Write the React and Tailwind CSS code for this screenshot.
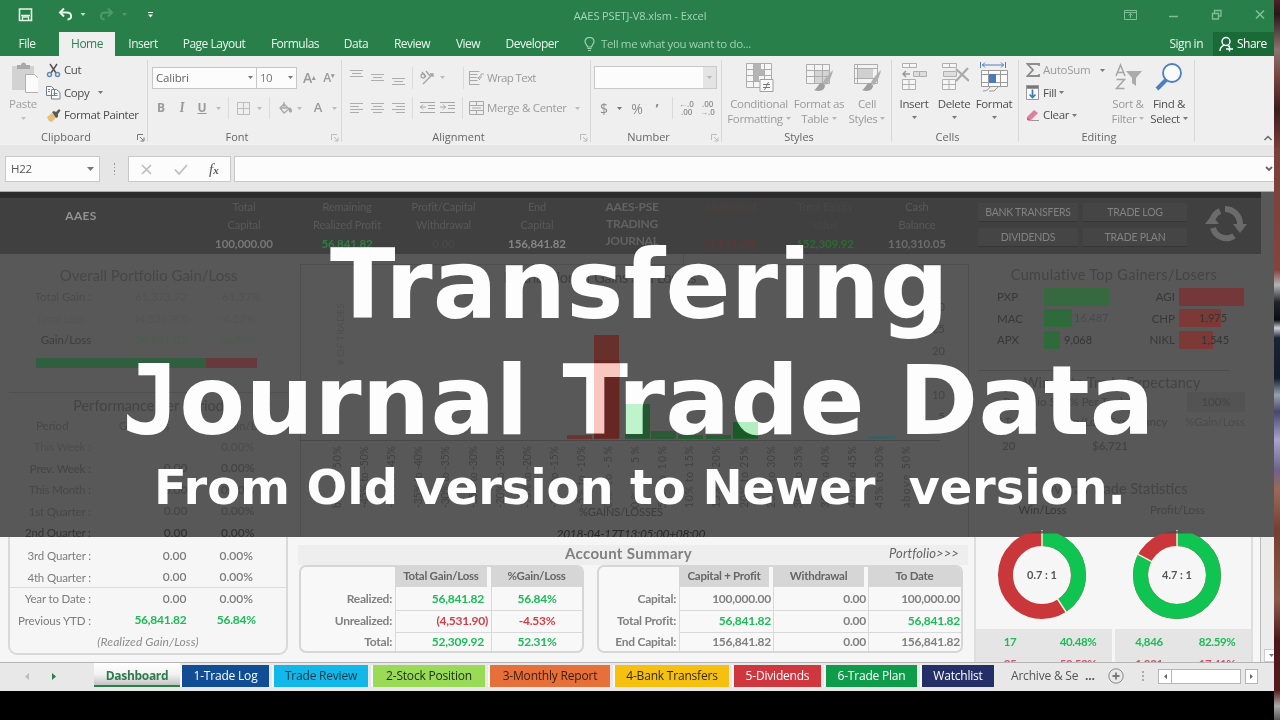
import clsx from "clsx";

const UI = "font-['Open_Sans','Noto_Sans',sans-serif]";

const TABS = [
  ["Insert", "w-[56px]"],
  ["Page Layout", "w-[86px]"],
  ["Formulas", "w-[76px]"],
  ["Data", "w-[46px]"],
  ["Review", "w-[66px]"],
  ["View", "w-[46px]"],
  ["Developer", "w-[82px]"],
];

const SHEETS = [
  ["1-Trade Log", "ml-[2px] w-[87px] bg-[#114d94] text-white"],
  ["Trade Review", "ml-[5px] w-[94px] bg-[#12b8ea] text-[#173540]"],
  ["2-Stock Position", "ml-[5px] w-[112px] bg-[#99da57] text-[#22301a]"],
  ["3-Monthly Report", "ml-[5px] w-[120px] bg-[#e5703a] text-[#3a1c10]"],
  ["4-Bank Transfers", "ml-[5px] w-[114px] bg-[#f5c010] text-[#352a08]"],
  ["5-Dividends", "ml-[5px] w-[87px] bg-[#cd373d] text-white"],
  ["6-Trade Plan", "ml-[5px] w-[91px] bg-[#0f9c4a] text-white"],
  ["Watchlist", "ml-[5px] w-[72px] bg-[#232f66] text-white"],
];

const BARS = [
  { x: 567, y: 435, h: 4, c: "#6b3431" },
  { x: 594, y: 335, h: 104, c: "#68302b" },
  { x: 625, y: 404, h: 35, c: "#2d5a3c" },
  { x: 651, y: 431, h: 8, c: "#2d5a36" },
  { x: 678, y: 435, h: 4, c: "#24602f" },
  { x: 706, y: 435, h: 4, c: "#24602f" },
  { x: 733, y: 422, h: 17, c: "#245f33" },
];

const RANGES = [
  "below -50%", "-45% to -50%", "-40% to -45%", "-35% to -40%", "-30% to -35%", "-25% to -30%",
  "-20% to -25%", "-15% to -20%", "-10% to -15%", "-5% to -10%", "0% to -5%", "0% to 5%", "5% to 10%",
  "10% to 15%", "15% to 20%", "20% to 25%", "25% to 30%", "30% to 35%", "35% to 40%", "40% to 45%",
  "45% to 50%", "above 50%",
];

function Caret({ className = "text-[#777]" }) {
  return (
    <svg width="5" height="3" viewBox="0 0 5 3" className={clsx("shrink-0", className)}>
      <path d="M0 0h5L2.5 3z" fill="currentColor" />
    </svg>
  );
}

function Launcher({ dim }) {
  return (
    <svg width="8" height="8" viewBox="0 0 8 8" fill="none" stroke={dim ? "#bbb" : "#777"}>
      <path d="M.5 6V.5H6M3 3l3.5 3.5M7 3.5V7H3.5" />
    </svg>
  );
}

function Group({ label, width, launcher, dim, children }) {
  return (
    <div className={clsx("relative flex h-[89px] flex-col", width)}>
      <div className="flex h-[73px] w-full">{children}</div>
      <div className="flex h-[18px] items-center justify-center pt-[3px] pr-4 text-[11px] text-[#666]">{label}</div>
      {launcher && (
        <span className="absolute right-[3px] bottom-[3px]">
          <Launcher dim={dim} />
        </span>
      )}
      <span className="absolute top-1 right-0 h-[82px] w-px bg-[#d8d8d8]" />
    </div>
  );
}

function Sep({ className }) {
  return <span className={clsx("h-[22px] w-px shrink-0 bg-[#dadada]", className)} />;
}

function Lines({ rows, className }) {
  return (
    <svg width="14" height="14" viewBox="0 0 14 14" stroke="#adadad" className={clsx("shrink-0", className)}>
      {rows.map(([x1, x2, y]) => (
        <path key={y} d={`M${x1} ${y}.5H${x2}`} />
      ))}
    </svg>
  );
}

function BigButton({ icon, lines, width, dim, caretBelow }) {
  return (
    <div className={clsx("flex flex-col items-center pt-[6px]", width, dim ? "text-[#9b9b9b]" : "text-[#505050]")}>
      <div className="mb-[2px] flex h-[32px] items-start justify-center">{icon}</div>
      {lines.map((l, i) => (
        <div key={l} className="flex h-[15px] items-center gap-[3px] text-[11.5px] leading-[15px] tracking-[-0.35px] whitespace-nowrap">
          {l}
          {i === 1 && <Caret className={dim ? "text-[#b5b5b5]" : "text-[#777]"} />}
        </div>
      ))}
      {caretBelow && <div className="flex h-[13px] items-center"><Caret /></div>}
    </div>
  );
}

function GridIcon({ kind }) {
  return (
    <svg width="30" height="31" viewBox="0 0 30 31" fill="none" stroke="#adadad">
      {kind === "cond" && (
        <>
          <path fill="#f6f6f6" d="M2.500 1.500h25v24h-25zM2.500 7.500h25M2.500 13.500h25M2.500 19.500h25M9.500 1.500v24M20.500 1.500v24" />
          <path d="M10 2h7v5h3v6h-5v6h-5z" fill="#b4b4b4" stroke="none" />
          <path d="M16 17.500h13v12H16z" fill="#fafafa" stroke="#a0a0a0" />
          <path d="M19 22.500h7M19 25.500h7M24.500 20l-4 8" stroke="#777" />
        </>
      )}
      {(kind === "table" || kind === "cell") && (
        <>
          <path fill="#f3f3f3" d="M2.500 2.500h23v19h-23z" />
          {kind === "table" ? (
            <>
              <path d="M10 8h15v13H10z" fill="#d4d4d4" stroke="none" />
              <path d="M2.500 8.500h23M2.500 14.500h23M10.500 2.500v19M18.500 2.500v19" />
            </>
          ) : (
            <>
              <path d="M6 7h15v9H6z" fill="#d0d0d0" stroke="none" />
              <path d="M2.500 6.500h23M5.500 2.500v19M2.500 16.500h23" />
            </>
          )}
          <path d="M29 8c-4 4-9 9-10 13l3 2c3-3 6-9 7-15z" fill="#b0b0b0" stroke="none" />
          <path d="M18 21c-4 0-4 5-8 7 5 2 11 1 11-5z" fill="#9f9f9f" stroke="none" />
        </>
      )}
    </svg>
  );
}

function CellsIcon({ kind }) {
  return (
    <svg width="30" height="31" viewBox="0 0 30 31" fill="none" stroke="#b0b0b0">
      {kind !== "format" && <path fill="#f6f6f6" d="M3.500 1.500h14v4h-14zM10.500 1.500v4M3.500 17.500h13v10h-13zM10 17.500v10M3.500 22.500h13" />}
      {kind === "insert" && (
        <>
          <path d="M14.500 9.500h13v5h-13zM20.500 9.500v5" fill="#ddd" />
          <path d="M4 12h7M7 9l-3 3 3 3" stroke="#999" strokeWidth="1.500" />
        </>
      )}
      {kind === "delete" && (
        <>
          <path d="M4.500 9.500h13v5h-13z" fill="#ddd" />
          <path d="M17 7l13 12M29 6L17 19" stroke="#a9a9a9" strokeWidth="2.200" />
        </>
      )}
      {kind === "format" && (
        <>
          <path d="M3 3h22M6 .5L3.500 3 6 5.500M22 .5L24.500 3 22 5.500M1.500 0v6M26.500 0v6" stroke="#4f7fb5" />
          <path fill="#fbfbfb" stroke="#999" d="M2.500 8.500h26v16h-26zM9.500 8.500v16M21.500 8.500v16M2.500 12.500h26M2.500 20.500h26" />
          <path d="M10 12h7v9h-7z" fill="#4a7db8" stroke="none" />
          <path d="M4 29c3 0 5-1 7-4M10 29h5l4-4" stroke="#999" />
        </>
      )}
    </svg>
  );
}

function TitleBar() {
  return (
    <div className="flex h-8 items-center bg-[#287f4a] text-[11px] text-[#a5d6b5]">
      <svg width="160" height="32" viewBox="0 0 160 32" fill="none" stroke="#e6f5ea">
        <path d="M19.500 9h12v11.500h-12zM21 15.500h9" strokeWidth="1.600" />
        <path d="M22.500 20v-3h6v3" strokeWidth="1.300" />
        <path d="M64 8.500l-4 4 4 4M60.500 12.500h6c6 0 6 6.500 1 7" strokeWidth="2" />
        <path d="M80.500 13h5l-2.500 3z" fill="#bfe3ca" stroke="none" />
        <path d="M108 8.500l4 4-4 4M111.500 12.500h-6c-6 0-6 6.500-1 7" stroke="#4e9a69" strokeWidth="2" />
        <path d="M122 13h5l-2.500 3z" fill="#4e9a69" stroke="none" />
        <path d="M148 12.500h5" />
        <path d="M148 14.500h5l-2.500 3z" fill="#e6f5ea" stroke="none" />
      </svg>
      <div className="w-[960px] pt-[1px] text-center tracking-[-0.1px]">AAES PSETJ-V8.xlsm - Excel</div>
      <svg width="154" height="32" viewBox="0 0 154 32" fill="none" stroke="#7fbf95">
        <path d="M4.500 10.500h12v9h-12zM4.500 12.500h12M10.500 18v-4M8.500 15.500l2-2 2 2" />
        <path d="M49 16.500h9" strokeWidth="1.500" />
        <path d="M92.500 13.500h6v5.500h-6zM94.500 13V10.500h6.500v5.500h-2" strokeWidth="1.300" />
        <path d="M136 10.500l8 8M144 10.500l-8 8" strokeWidth="1.600" />
      </svg>
    </div>
  );
}

function TabRow() {
  return (
    <div className="flex h-6 items-center bg-[#287f4a] text-center text-[12px] tracking-[-0.5px] text-[#e9f6ed]">
      <span className="w-[54px]">File</span>
      <span className="ml-[5px] h-6 w-[56px] bg-[#efefef] leading-[23px] text-[#2e8150]">Home</span>
      {TABS.map(([name, width]) => (
        <span key={name} className={width}>{name}</span>
      ))}
      <svg width="11" height="15" viewBox="0 0 11 15" fill="none" stroke="#9fd3b0" className="ml-[11px]" strokeWidth="1.200">
        <path d="M3.500 10c0-2-2.500-3-2.500-5.500a4.500 4.200 0 0 1 9 0C10 7 7.500 8 7.500 10zM3.500 11.500h4M4 13.500h3" />
      </svg>
      <span className="ml-[6px] text-[11.5px] tracking-[-0.35px] text-[#9fd3b0]">Tell me what you want to do...</span>
      <span className="mr-[10px] ml-auto">Sign in</span>
      <span className="flex h-6 w-[61px] items-center gap-[3px] bg-[#1a6a38] pl-[6px] text-white">
        <svg width="15" height="16" viewBox="0 0 15 16" fill="none" stroke="#fff" strokeWidth="1.400">
          <circle cx="7" cy="5.500" r="4" />
          <path d="M1 15c0-3.500 2-5 4.500-5.800M8.500 9.500l1.500 1M7 13h7M10.500 9.500v6" />
        </svg>
        Share
      </span>
    </div>
  );
}

function Ribbon() {
  return (
    <div className="flex h-[89px] bg-[#efefef] text-[11.5px]">
      <Group label="Clipboard" width="w-[148px]" launcher>
        <div className="flex w-[46px] flex-col items-center pt-[6px] text-[#a0a0a0]">
          <svg width="30" height="32" viewBox="0 0 30 32">
            <path d="M4 4h22v24H4z" fill="#d2d2d2" />
            <path d="M9 7V3h4a2.500 2.500 0 0 1 5 0h4v4z" fill="#a9a9a9" />
            <path d="M17.500 12.500h9l4 4v14h-13z" fill="#fbfbfb" stroke="#b0b0b0" />
          </svg>
          <div className="mt-[1px] leading-[18px] tracking-[-0.3px]">Paste</div>
          <Caret className="mt-1 text-[#c0c0c0]" />
        </div>
        <div className="flex flex-col pt-[3px] tracking-[-0.4px] text-[#4d4d4d]">
          <div className="flex h-[22px] items-center gap-[3px]">
            <svg width="15" height="15" viewBox="0 0 15 15" fill="none" stroke="#6c7584" strokeWidth="1.500">
              <path d="M4 1l6 9M11 1L5 10" stroke="#555" />
              <circle cx="3.500" cy="11.500" r="2" stroke="#6388b5" />
              <circle cx="11.500" cy="11.500" r="2" stroke="#6388b5" />
            </svg>
            Cut
          </div>
          <div className="flex h-[23px] items-center gap-[3px]">
            <svg width="15" height="15" viewBox="0 0 15 15" fill="#fafafa" stroke="#71808f">
              <path d="M.5 1.500h5l3 3v6h-8zM5.500 4.500h5l3.500 3v6.500h-8.500z" />
              <path d="M2 4.500h2M2 6.500h2M7.500 8.500h4M7.500 10.500h4" />
            </svg>
            Copy
            <Caret className="ml-[6px] text-[#777]" />
          </div>
          <div className="flex h-[22px] items-center gap-[3px]">
            <svg width="15" height="15" viewBox="0 0 15 15">
              <path d="M1 9l5-4 4 4-4 5-3-1z" fill="#e8bf78" />
              <path d="M6 4l2-1 2 1 3-3 1.500 1.500L12 6v3l-2 1z" fill="#5a5a5a" />
            </svg>
            Format Painter
          </div>
        </div>
      </Group>

      <Group label="Font" width="w-[194px]" launcher dim>
        <div className="flex flex-col pt-[10px] pl-1 text-[#9a9a9a]">
          <div className="flex h-[23px] items-center">
            <div className="flex h-[22px] w-[105px] items-center justify-between border border-[#c6c6c6] bg-[#fcfcfc] px-[3px] tracking-[-0.2px] text-[#666]">
              Calibri <Caret />
            </div>
            <div className="-ml-px flex h-[22px] w-[41px] items-center justify-between border border-[#c6c6c6] bg-[#fcfcfc] px-[3px] tracking-[-0.5px] text-[#777]">
              10 <Caret />
            </div>
            <span className="ml-[6px] text-[14px] font-semibold">A<sup className="text-[7px]">▴</sup></span>
            <span className="ml-[7px] text-[12px] font-semibold">A<sup className="text-[7px]">▾</sup></span>
          </div>
          <div className="mt-[8px] flex h-[22px] items-center">
            <span className="w-[18px] text-center text-[12px] font-bold">B</span>
            <span className="ml-[3px] w-[18px] text-center font-serif text-[13px] font-bold italic">I</span>
            <span className="ml-[2px] w-[18px] text-center text-[12px] font-bold underline">U</span>
            <Caret className="ml-[5px] text-[#bbb]" />
            <Sep className="ml-[7px]" />
            <svg width="13" height="13" viewBox="0 0 13 13" fill="none" stroke="#bdbdbd" className="ml-[8px]">
              <path d="M.5.5h12v12H.5zM6.500.5v12M.5 6.500h12" />
            </svg>
            <Caret className="ml-[7px] text-[#bbb]" />
            <Sep className="ml-[7px]" />
            <svg width="14" height="14" viewBox="0 0 14 14" fill="none" stroke="#a9a9a9" strokeWidth="1.300" className="ml-[8px]">
              <path d="M6 3l5 5-5 4-4-5zM6 6V1M2 7h8" />
              <path d="M12 7c2 2 1.500 4 .5 4s-1.500-2-.5-4z" fill="#a0a0a0" />
            </svg>
            <Caret className="ml-[5px] text-[#bbb]" />
            <span className="ml-[9px] w-[14px] text-center text-[13px] font-semibold">A</span>
            <Caret className="ml-[7px] text-[#bbb]" />
          </div>
        </div>
      </Group>

      <Group label="Alignment" width="w-[249px]" launcher dim>
        <div className="flex flex-col pt-[10px] pl-[8px] text-[#9b9b9b]">
          <div className="flex h-[23px] items-center">
            <Lines className="-mt-2" rows={[[0, 13, 3], [2, 11, 6], [0, 13, 9]]} />
            <Lines className="ml-[7px]" rows={[[0, 13, 3], [2, 11, 6], [0, 13, 9]]} />
            <Lines className="mt-2 ml-[7px]" rows={[[0, 13, 3], [2, 11, 6], [0, 13, 9]]} />
            <Sep className="ml-[6px]" />
            <svg width="17" height="17" viewBox="0 0 17 17" fill="none" stroke="#a3a3a3" strokeWidth="1.300" className="ml-[6px]">
              <circle cx="4" cy="7" r="2" />
              <path d="M3 3l4 5M7 2l4 5M4 15L14 5M14 8V5h-3" />
            </svg>
            <Caret className="ml-[4px] text-[#bbb]" />
            <Sep className="ml-[18px]" />
            <svg width="15" height="16" viewBox="0 0 15 16" fill="none" stroke="#a9a9a9" className="ml-[5px]">
              <path d="M.5 1.500h10M.5 4.500h8M.5 7.500h8M.5 10.500h8M.5 14.500h10M.5 1v14M15 4h-3v4H9M11 6L9 8l2 2" />
            </svg>
            <span className="ml-[3px] tracking-[-0.65px]">Wrap Text</span>
          </div>
          <div className="mt-[8px] flex h-[22px] items-center">
            <Lines rows={[[0, 13, 2], [0, 9, 5], [0, 13, 8], [0, 9, 11]]} />
            <Lines className="ml-[7px]" rows={[[0, 13, 2], [2, 11, 5], [0, 13, 8], [2, 11, 11]]} />
            <Lines className="ml-[7px]" rows={[[0, 13, 2], [4, 13, 5], [0, 13, 8], [4, 13, 11]]} />
            <Sep className="ml-[6px]" />
            <svg width="37" height="14" viewBox="0 0 37 14" fill="none" stroke="#a6a6a6" className="ml-[6px]">
              <path d="M1 1.500h15M9 4.500h7M9 7.500h7M1 11.500h15M1 6h6M4 3.500L1.500 6 4 8.500" />
              <path d="M21 1.500h15M29 4.500h7M29 7.500h7M21 11.500h15M21 6h6M24 3.500L26.500 6 24 8.500" />
            </svg>
            <Sep className="ml-[6px]" />
            <svg width="15" height="15" viewBox="0 0 15 15" fill="none" stroke="#a9a9a9" className="ml-[6px]">
              <path d="M.5.500h14v13H.5zM.5 4.500h14M.5 9.500h14M7.500.5v4M7.500 9.500v4M3 7h9" />
            </svg>
            <span className="ml-[3px] tracking-[-0.35px]">Merge & Center</span>
            <Caret className="ml-[8px] text-[#bbb]" />
          </div>
        </div>
      </Group>

      <Group label="Number" width="w-[131px]" launcher dim>
        <div className="flex flex-col pt-[10px] pl-[3px] text-[#8d8d8d]">
          <div className="flex h-[23px] w-[123px] items-stretch border border-[#c9c9c9] bg-[#fcfcfc]">
            <span className="ml-auto flex w-[13px] items-center justify-center bg-[#e4e4e4]">
              <Caret className="text-[#b5b5b5]" />
            </span>
          </div>
          <div className="mt-[8px] flex h-[22px] items-center text-[14px]">
            <span className="w-[20px] text-center">$</span>
            <Caret className="ml-[3px] text-[#777]" />
            <span className="ml-[7px] w-[16px] text-center">%</span>
            <span className="ml-[5px] w-[14px] text-center font-bold">’</span>
            <Sep className="ml-[8px]" />
            <span className="ml-[6px] w-[17px] text-[8px] leading-[8px] font-semibold">←.0<br />&nbsp;.00</span>
            <span className="ml-[4px] w-[17px] text-[8px] leading-[8px] font-semibold">&nbsp;.00<br />→.0</span>
          </div>
        </div>
      </Group>

      <Group label="Styles" width="w-[170px]">
        <div className="ml-[2px] flex">
          <BigButton width="w-[70px]" dim icon={<GridIcon kind="cond" />} lines={["Conditional", "Formatting"]} />
          <BigButton width="w-[50px]" dim icon={<GridIcon kind="table" />} lines={["Format as", "Table"]} />
          <BigButton width="w-[46px]" dim icon={<GridIcon kind="cell" />} lines={["Cell", "Styles"]} />
        </div>
      </Group>

      <Group label="Cells" width="w-[127px]">
        <div className="ml-[2px] flex">
          <BigButton width="w-[40px]" caretBelow icon={<CellsIcon kind="insert" />} lines={["Insert"]} />
          <BigButton width="w-[40px]" caretBelow icon={<CellsIcon kind="delete" />} lines={["Delete"]} />
          <BigButton width="w-[40px]" caretBelow icon={<CellsIcon kind="format" />} lines={["Format"]} />
        </div>
      </Group>

      <Group label="Editing" width="w-[176px]">
        <div className="ml-[7px] flex w-[82px] flex-col pt-[3px] tracking-[-0.3px] text-[#4d4d4d]">
          <div className="flex h-[22px] items-center text-[#9b9b9b]">
            <svg width="14" height="14" viewBox="0 0 14 14" fill="none" stroke="#8d8d8d" strokeWidth="1.800">
              <path d="M13 3V1H1.500L7 7l-5.500 6H13v-2" />
            </svg>
            <span className="ml-[3px]">AutoSum</span>
            <Caret className="mr-[3px] ml-auto text-[#777]" />
          </div>
          <div className="flex h-[23px] items-center">
            <svg width="13" height="15" viewBox="0 0 13 15" fill="#fafafa" stroke="#999">
              <path d="M.5.5h12v14H.5z" />
              <path d="M.5.5h12v3H.5z" fill="#777" />
              <path d="M6.500 4.500v8M3.500 9.500l3 3 3-3" fill="none" stroke="#3f78b8" strokeWidth="1.700" />
            </svg>
            <span className="mr-[3px] ml-[4px]">Fill</span>
            <Caret />
          </div>
          <div className="flex h-[22px] items-center">
            <svg width="14" height="13" viewBox="0 0 14 13">
              <path d="M1 8l7-7 4 3-7 7z" fill="#df7f9d" />
              <path d="M1 8l4 3-1 1-3-1z" fill="#c55f80" />
              <path d="M5 11.500h8" stroke="#999" />
            </svg>
            <span className="mr-[3px] ml-[3px]">Clear</span>
            <Caret />
          </div>
        </div>
        <BigButton
          width="w-[40px]"
          dim
          lines={["Sort &", "Filter"]}
          icon={
            <svg width="28" height="30" viewBox="0 0 28 30" fill="none" stroke="#a5a5a5" strokeWidth="1.500">
              <path d="M2 14L6.500 3 11 14M3.500 10.500h6M2.500 17.500h8l-8 9h8" />
              <path d="M12 9h16l-6 7v8l-4-3v-5z" fill="#ababab" stroke="none" />
            </svg>
          }
        />
        <BigButton
          width="w-[42px]"
          lines={["Find &", "Select"]}
          icon={
            <svg width="28" height="30" viewBox="0 0 28 30" fill="#fafafa" stroke="#4d7fbd">
              <path d="M11 18l-9 9" strokeWidth="4" />
              <circle cx="17" cy="11" r="9" strokeWidth="1.800" />
            </svg>
          }
        />
      </Group>
      <svg width="10" height="6" viewBox="0 0 10 6" fill="none" stroke="#666" strokeWidth="1.500" className="mt-[79px] mr-[1px] ml-auto">
        <path d="M1.500 5L5 1.500 8.500 5" />
      </svg>
    </div>
  );
}

function FormulaBar() {
  return (
    <div className="flex h-[47px] items-start border-b border-[#a9a9a9] bg-[#e6e6e6] pt-[11px] text-[12px] text-[#555]">
      <div className="ml-[5px] flex h-[26px] w-[95px] items-center justify-between border border-[#c9c9c9] bg-[#fcfcfc] px-[5px] text-[11.5px] tracking-[-0.3px]">
        H22
        <svg width="7" height="4" viewBox="0 0 7 4"><path d="M0 0h7L3.500 4z" fill="#777" /></svg>
      </div>
      <div className="ml-[13px] flex h-[26px] w-[3px] flex-col items-center justify-center gap-[2px]">
        {[0, 1, 2, 3].map((i) => <span key={i} className="size-[1.500px] bg-[#999]" />)}
      </div>
      <div className="ml-[12px] flex h-[26px] w-[103px] items-center border border-[#c9c9c9] bg-[#fcfcfc]">
        <svg width="60" height="24" viewBox="0 0 60 24" fill="none" stroke="#bdbdbd" strokeWidth="1.600">
          <path d="M13 8l9 9M22 8l-9 9M46 12.500l4 4.500 8-9" />
        </svg>
        <span className="ml-[20px] font-['Liberation_Serif',serif] text-[15px] italic">f<span className="text-[11px] font-bold">x</span></span>
      </div>
      <div className="ml-[3px] flex h-[26px] flex-1 items-center justify-end border border-r-0 border-[#c9c9c9] bg-[#fcfcfc]">
        <svg width="9" height="6" viewBox="0 0 9 6" fill="none" stroke="#666" strokeWidth="1.800"><path d="M1 1l3 3 3-3" /></svg>
      </div>
    </div>
  );
}

function Kpi({ lines, width, tone = "text-[#595959]", value, valueTone = "text-[#777]" }) {
  return (
    <div className={clsx("flex flex-col items-center text-[11px] tracking-[-0.1px]", width, tone)}>
      <span className="h-[18px] leading-[18px] whitespace-nowrap">{lines[0]}</span>
      <span className="h-[18px] leading-[17px] whitespace-nowrap">{lines[1]}</span>
      <span className={clsx("h-[20px] text-[11.5px] leading-[20px] font-bold", valueTone)}>{value}</span>
    </div>
  );
}

function DashHeader() {
  return (
    <div className="h-[62px] w-[1261px] border-t-[6px] border-[#2c2c2c] bg-[#404040]">
      <div className="flex items-start">
        <div className="w-[162px] pt-[9px] text-center text-[12px] font-bold tracking-[0.3px] text-[#929292]">AAES</div>
        <Kpi width="ml-[29px] w-[106px]" lines={["Total", "Capital"]} value="100,000.00" />
        <Kpi width="w-[100px]" lines={["Remaining", "Realized Profit"]} value="56,841.82" valueTone="text-[#2f7d45]" />
        <Kpi width="w-[93px]" lines={["Profit/Capital", "Withdrawal"]} value="0.00" valueTone="text-[#484848]" />
        <Kpi width="w-[94px]" lines={["End", "Capital"]} value="156,841.82" valueTone="text-[#858585]" />
        <div className="flex w-[96px] flex-col items-center text-[12px] leading-[17px] font-bold tracking-[-0.3px] text-[#626262]">
          <span>AAES-PSE</span><span>TRADING</span><span>JOURNAL</span>
        </div>
        <Kpi width="w-[102px]" tone="text-[#4f4040]" lines={["Unrealized", ""]} value="(4,531.90)" valueTone="text-[#5c3836]" />
        <Kpi width="w-[86px]" tone="text-[#474747]" lines={["Total Equity", "Value"]} value="152,309.92" valueTone="text-[#2c6b33]" />
        <Kpi width="w-[98px]" lines={["Cash", "Balance"]} value="110,310.05" valueTone="text-[#6c6c6c]" />
        <div className="mt-[5px] ml-[12px] grid grid-cols-[100px_104px] gap-x-[5px] gap-y-[6px] text-center text-[10.500px] leading-[18px] tracking-[-0.25px] text-[#828282]">
          {["BANK TRANSFERS", "TRADE LOG", "DIVIDENDS", "TRADE PLAN"].map((b) => (
            <span key={b} className="h-[19px] border-b border-[#363636] bg-[#454545]">{b}</span>
          ))}
        </div>
        <svg width="42" height="40" viewBox="0 0 42 40" fill="none" stroke="#6b6b6b" strokeWidth="6" className="mt-[6px] ml-[18px]">
          <path d="M8 24a14 14 0 0 0 21 8M8 14a14 14 0 0 1 7-7M20 5a15 15 0 0 1 15 15" />
          <path d="M0 20L7 11l7 9zM28 20h14l-7 9z" fill="#6b6b6b" stroke="none" />
        </svg>
      </div>
    </div>
  );
}

function PeriodRow({ label, gain, pct, tone }) {
  return (
    <div className={clsx("flex h-[21.500px] items-center", tone)}>
      <span className="w-[83px] text-right text-[11.5px] tracking-[-0.15px]">{label}</span>
      <span className="w-[98px] text-right font-semibold">{gain}</span>
      <span className="w-[102px] text-center font-semibold">{pct}</span>
    </div>
  );
}

function DimLeft() {
  return (
    <div className="flex w-[288px] flex-col pt-[10px] pl-[9px] text-[11.5px] text-[#484848]">
      <div className="h-[22px] text-center text-[15px] leading-[22px] text-[#474747]">Overall Portfolio Gain/Loss</div>
      <div className="flex h-[22px] items-center text-[#4b4b4b]">
        <span className="w-[83px] text-right">Total Gain :</span>
        <span className="w-[97px] text-right text-[#525252]">61,373.72</span>
        <span className="w-[102px] pl-2 text-center text-[#525252]">61.37%</span>
      </div>
      <div className="flex h-[21px] items-center text-[#545454]">
        <span className="w-[83px] text-right">Total Loss :</span>
        <span className="w-[97px] text-right">(4,531.90)</span>
        <span className="w-[102px] text-center">-4.53%</span>
      </div>
      <div className="flex h-[22px] items-center text-[#3d3d3d]">
        <span className="w-[83px] text-right">Gain/Loss</span>
        <span className="w-[97px] text-right text-[#4c5c50]">56,841.82</span>
        <span className="w-[102px] text-center text-[#4c5c50]">56.84%</span>
      </div>
      <div className="mt-[7px] ml-[27px] flex h-[10px]">
        <span className="w-[170px] bg-[#2f5f3f]" />
        <span className="w-[51px] bg-[#66393d]" />
      </div>
      <div className="mt-[24px] h-[23px] border-t border-[#505050] text-center text-[14.500px] leading-[25px] text-[#444]">Performance Per Period</div>
      <div className="flex h-[21px] items-center">
        <span className="w-[89px] pl-[27px]">Period</span>
        <span className="w-[102px] pl-[21px]">Gain/Loss</span>
        <span className="pl-[13px]">%Gain/Loss</span>
      </div>
      <div className="text-[12px] text-[#424242]">
        <PeriodRow label="This Week :" gain="" pct="0.00%" tone="text-[#4d4d4d]" />
        <PeriodRow label="Prev. Week :" gain="0.00" pct="0.00%" tone="text-[#444]" />
        <PeriodRow label="This Month :" gain="0.00" pct="0.00%" tone="text-[#474747]" />
        <PeriodRow label="1st Quarter :" gain="0.00" pct="0.00%" tone="text-[#474747]" />
        <PeriodRow label="2nd Quarter :" gain="0.00" pct="0.00%" tone="text-[#333]" />
      </div>
    </div>
  );
}

function Distribution() {
  return (
    <svg width="687" height="283" viewBox="288 254 687 283" fontSize="11" className="font-['Lato',sans-serif]">
      <path d="M300.500 537V264.500H968.500V537M683.500 252v12" fill="none" stroke="#4d4d4d" />
      <text x="600" y="283" textAnchor="middle" fontSize="14.500" fill="#3e3e3e" textLength="193">Distribution of Gains and Losses</text>
      {BARS.map((b) => <rect key={b.x} x={b.x} y={b.y} width="25" height={b.h} fill={b.c} />)}
      <rect x="867" y="436" width="28" height="3" fill="#3f5f5f" />
      <path d="M300 440.500H940" stroke="#484848" />
      {[30, 25, 20, 15, 10, 5].map((n, i) => (
        <text key={n} x="945" y={311 + i * 22} textAnchor="end" fill="#444">{n}</text>
      ))}
      {RANGES.map((r, i) => (
        <text key={r} transform={`translate(${341 + i * 27.1} 446) rotate(-90)`} textAnchor="end" fontSize="10.500" fill="#424242" textLength="62">{r}</text>
      ))}
      <text x="319" y="390" transform="rotate(-90 319 365)" fill="#4f4f4f" fontSize="10"># OF TRADES</text>
      <text x="621" y="516" textAnchor="middle" fill="#3d3d3d" textLength="84">%GAINS/LOSSES</text>
      <text x="631" y="538" textAnchor="middle" fontSize="12" fontStyle="italic" fill="#262626" textLength="149">2018-04-17T13:05:00+08:00</text>
    </svg>
  );
}

function Mover({ name, width, tone, value, labelWidth, note }) {
  return (
    <div className="flex h-[21.500px] items-center">
      <span className={clsx("pr-[4px] text-[#383838]", labelWidth)}>{name}</span>
      <span className={clsx("h-[18px]", width, tone)} />
      <span className={clsx("text-[11px] text-[#343434]", note)}>{value}</span>
    </div>
  );
}

function DimRight() {
  return (
    <div className="flex w-[278px] flex-col pt-[10px] text-[11.5px] text-[#444]">
      <div className="h-[22px] text-center text-[14.500px] leading-[22px] tracking-[0.3px]">Cumulative Top Gainers/Losers</div>
      <div className="flex">
        <div className="w-[165px] pl-[22px]">
          <Mover name="PXP" labelWidth="w-[47px]" width="w-[65px]" tone="bg-[#36693f]" />
          <Mover name="MAC" labelWidth="w-[47px]" width="w-[28px]" tone="bg-[#2f6a3b]" value="16,487" note="pl-[2px] opacity-40" />
          <Mover name="APX" labelWidth="w-[47px]" width="w-[16px]" tone="bg-[#2f6a3b]" value="9,068" note="pl-[4px]" />
        </div>
        <div className="text-right">
          <Mover name="AGI" labelWidth="w-[39px]" width="w-[65px]" tone="bg-[#74383b]" />
          <Mover name="CHP" labelWidth="w-[39px]" width="w-[42px]" tone="bg-[#7c3936]" value="1,975" note="-ml-[22px]" />
          <Mover name="NIKL" labelWidth="w-[39px]" width="w-[34px]" tone="bg-[#7c3936]" value="1,545" note="-ml-[12px]" />
        </div>
      </div>
      <div className="mt-[19px] ml-1 h-[22px] w-[250px] border-t border-[#4c4c4c] pl-[16px] text-center text-[14.500px] leading-[24px] tracking-[0.1px] whitespace-nowrap">Win Rate Trade Expectancy</div>
      <div className="flex h-[20px] items-center">
        <span className="w-[212px] pl-[28px] whitespace-nowrap">Portfolio Size% Per Trade%</span>
        <span className="h-[20px] w-[58px] bg-[#535353] text-center leading-[20px]">100%</span>
      </div>
      <div className="flex h-[21px] items-center whitespace-nowrap">
        <span className="w-[81px] pl-[7px]"># of Trades</span>
        <span className="w-[129px]">Gain/Loss Expectancy</span>
        <span className="text-[#4b4b4b]">%Gain/Loss</span>
      </div>
      <div className="flex h-[21px] items-center pt-[6px] font-semibold">
        <span className="w-[117px] pl-[27px]">20</span>
        <span>$6,721</span>
      </div>
      <div className="mt-[24px] h-[22px] pl-[2px] text-center text-[14.500px] leading-[22px]">Overall Trade Statistics</div>
      <div className="flex h-[20px] items-center">
        <span className="w-[135px] text-center text-[#383838]">Win/Loss</span>
        <span className="w-[135px] text-center">Profit/Loss</span>
      </div>
    </div>
  );
}

function SummaryTable({ cols, heads, rows, className }) {
  return (
    <div className={clsx("h-[88px] overflow-hidden rounded-[7px] border-2 border-[#d6d6d6] bg-[#f8f8f8] text-[12px] font-bold tracking-[-0.25px]", className)}>
      <div className={clsx("grid h-[20px] text-center text-[11.5px] leading-[18px] tracking-[-0.25px] text-[#666]", cols)}>
        <span />
        {heads.map((h) => <span key={h} className="border-r-4 border-[#f8f8f8] bg-[#d6d6d6] last:border-r-0">{h}</span>)}
      </div>
      {rows.map((r, i) => (
        <div key={r[0]} className={clsx("grid h-[21.500px] text-right leading-[23px] text-[#808080]", cols)}>
          <span className="pr-[3px]">{r[0]}</span>
          {r.slice(1).map(([v, tone], j) => (
            <span key={j} className={clsx("border-l border-[#d9d9d9]", i < 2 && "border-b", tone)}>{v}</span>
          ))}
        </div>
      ))}
    </div>
  );
}

function Donut({ win, label, gapAngle }) {
  const c = 2 * Math.PI * 36.5;
  const a = (gapAngle * Math.PI) / 180;
  return (
    <svg width="92" height="92" viewBox="-46 -46 92 92" fill="none" strokeWidth="15">
      <circle r="36.500" stroke="#c9373a" />
      <circle r="36.500" stroke="#10c452" strokeDasharray={`${c * win} ${c}`} transform="rotate(-90)" />
      <path d={`M0 -28V-45M${28 * Math.sin(a)} ${-28 * Math.cos(a)}L${45 * Math.sin(a)} ${-45 * Math.cos(a)}`} stroke="#f0efd8" strokeWidth="1.500" />
      <path d="M-15 -41.500Q0 -47 15 -41.500Z" fill="#484848" opacity=".75" stroke="none" />
      <text y="4" textAnchor="middle" fontSize="11" fontWeight="700" fill="#555">{label}</text>
    </svg>
  );
}

const G = "text-[#1dbb58]";
const R = "text-[#cf4048]";

function LowerSheet() {
  return (
    <div className="flex h-[125px] overflow-visible bg-[#f6f6f6] font-['Lato',sans-serif]">
      <div className="ml-[8px] h-[118px] w-[280px] rounded-b-[9px] border-2 border-t-0 border-[#d9d9d9] pt-[8px] text-[12px] text-[#7c7c7c]">
        <PeriodRow label="3rd Quarter :" gain="0.00" pct="0.00%" />
        <PeriodRow label="4th Quarter :" gain="0.00" pct="0.00%" />
        <div className="-mt-px border-t border-[#dcdcdc]">
          <PeriodRow label="Year to Date :" gain="0.00" pct="0.00%" />
        </div>
        <div className="flex h-[21.500px] items-center tracking-[-0.25px]">
          <span className="w-[83px] text-right text-[11.5px] tracking-[-0.1px]">Previous YTD :</span>
          <span className={clsx("w-[98px] text-right font-bold", G)}>56,841.82</span>
          <span className={clsx("w-[102px] text-center font-bold", G)}>56.84%</span>
        </div>
        <div className="text-center text-[12px] leading-[21px] tracking-[0.1px] text-[#8c8c8c] italic">(Realized Gain/Loss)</div>
      </div>

      <div className="ml-[10px] w-[670px] pt-[8px]">
        <div className="grid h-[20px] grid-cols-[1fr_auto_1fr] items-center bg-[#eee] pr-[9px] pb-[3px]">
          <span />
          <span className="text-[15px] leading-[17px] font-bold tracking-[0.35px] text-[#808080]">Account Summary</span>
          <span className="text-right text-[13px] leading-[17px] tracking-[0.1px] text-[#666] italic">Portfolio&gt;&gt;&gt;</span>
        </div>
        <div className="flex">
          <SummaryTable
            className="ml-px w-[285px]"
            cols="grid-cols-[94px_96px_91px]"
            heads={["Total Gain/Loss", "%Gain/Loss"]}
            rows={[
              ["Realized:", ["56,841.82", `${G} pr-[7px]`], ["56.84%", `${G} text-center`]],
              ["Unrealized:", ["(4,531.90)", `${R} pr-[3px]`], ["-4.53%", `${R} text-center`]],
              ["Total:", ["52,309.92", `${G} pr-[7px]`], ["52.31%", `${G} text-center`]],
            ]}
          />
          <SummaryTable
            className="ml-[13px] w-[366px]"
            cols="grid-cols-[80px_94px_95px_93px]"
            heads={["Capital + Profit", "Withdrawal", "To Date"]}
            rows={[
              ["Capital:", ["100,000.00", "pr-[2px]"], ["0.00", "pr-[2px]"], ["100,000.00", "pr-px"]],
              ["Total Profit:", ["56,841.82", `${G} pr-[2px]`], ["0.00", "pr-[2px]"], ["56,841.82", `${G} pr-px`]],
              ["End Capital:", ["156,841.82", "pr-[2px]"], ["0.00", "pr-[2px]"], ["156,841.82", "pr-px"]],
            ]}
          />
        </div>
      </div>

      <div className="ml-[6px] w-[279px] border-x-2 border-[#dedede]">
        <div className="-mt-[8px] flex h-[100px] gap-[43px] pl-[20px]">
          <Donut win={0.405} label="0.7 : 1" gapAngle={147} />
          <Donut win={0.826} label="4.7 : 1" gapAngle={298} />
        </div>
        <div className="grid h-[33px] grid-cols-2 gap-x-[3px] overflow-hidden text-center text-[11.5px] font-bold tracking-[-0.4px]">
          {[["17", "40.48%", "25", "59.52%"], ["4,846", "82.59%", "1,031", "17.41%"]].map((q) => (
            <div key={q[0]} className="grid grid-cols-2 bg-[#e5e5e5] pt-[2px] leading-[22px]">
              <span className={G}>{q[0]}</span><span className={G}>{q[1]}</span>
              <span className="text-[#dc4a72]">{q[2]}</span><span className="text-[#dc4a72]">{q[3]}</span>
            </div>
          ))}
        </div>
      </div>
      <div className="ml-[7px] w-px bg-[#bbb]" />
      <div className="flex flex-1 items-end justify-end bg-[#ececec]">
        <span className="flex h-[13px] w-[10px] items-center justify-end border border-r-0 border-[#ccc] bg-white"><Caret /></span>
      </div>
    </div>
  );
}

function SheetTabs() {
  return (
    <div className="flex h-[29px] items-start border-t border-[#b5b5b5] bg-[#e8e8e8] text-[12px] tracking-[-0.2px]">
      <div className="flex h-[27px] w-[94px] items-center">
        <svg width="60" height="8" viewBox="0 0 60 8"><path d="M29 0v7l-4-3.500z" fill="#bdbdbd" /><path d="M52 0v7l4-3.500z" fill="#287f4a" /></svg>
      </div>
      <div className="h-[24px] w-[86px] border-b-2 border-[#287f4a] bg-gradient-to-b from-white via-[#f3f3f3] to-[#c4c4c4] text-center leading-[26px] font-bold tracking-[-0.3px] text-[#2f7a4d]">Dashboard</div>
      {SHEETS.map(([name, cls]) => (
        <div key={name} className={clsx("mt-[2px] h-[22px] text-center leading-[22px] whitespace-nowrap shadow-[-2px_0_0_#f7f7f7]", cls)}>{name}</div>
      ))}
      <div className="ml-[17px] w-[67px] overflow-hidden leading-[26px] whitespace-nowrap text-[#555]">Archive & Settings</div>
      <div className="ml-[7px] leading-[26px] font-bold text-[#555]">...</div>
      <svg width="16" height="16" viewBox="0 0 16 16" fill="none" stroke="#8a8a8a" className="mt-[5px] ml-[13px]">
        <circle cx="8" cy="8" r="7.200" />
        <path d="M8 4.500v7M4.500 8h7" strokeWidth="1.800" stroke="#777" />
      </svg>
      <div className="mt-[8px] ml-[18px] flex flex-col gap-[2px]">
        {[0, 1, 2].map((i) => <span key={i} className="size-[2px] bg-[#aaa]" />)}
      </div>
      <div className="mt-[6px] mr-[16px] ml-auto flex">
        <span className="flex h-[15px] w-[14px] items-center justify-center border border-[#b5b5b5] bg-white"><Caret className="rotate-90 text-[#666]" /></span>
        <span className="-ml-px h-[15px] w-[70px] border border-[#b5b5b5] bg-white" />
        <span className="ml-[4px] flex h-[15px] w-[13px] items-center justify-center border border-[#b5b5b5] bg-white"><Caret className="-rotate-90 text-[#666]" /></span>
      </div>
    </div>
  );
}

function Headline() {
  return (
    <div className="absolute top-[192px] left-0 h-[345px] w-[1274px] font-['DejaVu_Sans',sans-serif] font-bold whitespace-pre text-[#fdfdfd]">
      <div className="h-[151px] pt-[35px] pl-[330px] text-[96px] leading-[116px] tracking-[0.2px]">Transfering</div>
      <div className="h-[115px] pl-[122px] text-[96px] leading-[116px] tracking-[0.3px]">
        <span className="font-['DejaVu_Sans_Mono',monospace] tracking-[-0.500px]">J</span>ournal Trade Data
      </div>
      <div className="pl-[154px] text-[48px] leading-[58px] tracking-[-0.1px]">From Old version to Newer  version.</div>
      <span className="absolute top-[168px] left-[594px] h-[78px] w-[26px] bg-[#fbc9c2] mix-blend-multiply" />
      <span className="absolute top-[212px] left-[625px] h-[34px] w-[25px] bg-[#c0f5cd] mix-blend-multiply" />
      <span className="absolute top-[230px] left-[733px] h-[16px] w-[25px] bg-[#b4f0c2] mix-blend-multiply" />
    </div>
  );
}

export default function App() {
  return (
    <div className={clsx("relative flex h-[720px] w-[1280px] overflow-hidden bg-black", UI)}>
      <div className="flex w-[1274px] flex-col">
        <TitleBar />
        <TabRow />
        <Ribbon />
        <FormulaBar />
        <div className="h-[345px] overflow-hidden bg-[#585858] font-['Lato',sans-serif]">
          <DashHeader />
          <div className="flex">
            <DimLeft />
            <Distribution />
            <DimRight />
          </div>
        </div>
        <LowerSheet />
        <SheetTabs />
      </div>
      <Headline />
      <div className="w-[6px] bg-[linear-gradient(180deg,#4a2224_0,#2a1719_14px,#8b7472_50px,#784640_75px,#3c1c1d_110px,#7b403a_150px,#83443d_270px,#b4b4b4_285px,#20242a_302px,#0b0c12_320px,#ccd0d6_328px,#1b2234_338px,#141a2c_378px,#98a2ae_395px,#49456b_412px,#a9a4cf_440px,#6c6489_470px,#9b6a56_490px,#733f34_530px,#8b5a4b_600px,#4a1718_640px,#531b1b_690px,#aaa_706px,#555_720px)]" />
    </div>
  );
}
